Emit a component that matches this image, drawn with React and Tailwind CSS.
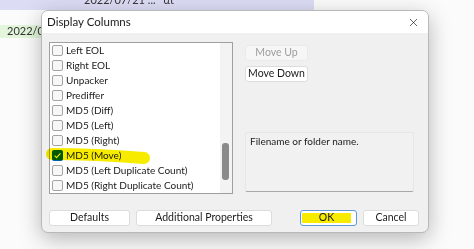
import React from 'react';
import { X } from 'lucide-react';

const columns = [
  { label: 'Left EOL' },
  { label: 'Right EOL' },
  { label: 'Unpacker' },
  { label: 'Prediffer' },
  { label: 'MD5 (Diff)' },
  { label: 'MD5 (Left)' },
  { label: 'MD5 (Right)' },
  { label: 'MD5 (Move)', checked: true },
  { label: 'MD5 (Left Duplicate Count)' },
  { label: 'MD5 (Right Duplicate Count)' },
];

const Checkbox = ({ checked }) =>
  checked ? (
    <span className="flex h-[11px] w-[11px] shrink-0 items-center justify-center rounded-[2px] bg-[#005fb8]">
      <svg width="9" height="9" viewBox="0 0 9 9" fill="none">
        <path d="M1.6 4.7 L3.6 6.6 L7.4 2.4" stroke="white" strokeWidth="1.1" />
      </svg>
    </span>
  ) : (
    <span className="h-[11px] w-[11px] shrink-0 rounded-[2px] border border-[#a3a3a3] bg-[#f7f7f7]" />
  );

const Button = ({ children, className = '', disabled }) => (
  <button
    type="button"
    className={
      'flex h-[16px] items-center justify-center whitespace-nowrap rounded-[3px] border text-[10.5px] ' +
      (disabled
        ? 'border-[#eaeaea] bg-[#f6f6f6] text-[#9d9d9d] '
        : 'border-[#dcdcdc] bg-white text-[#1b1b1b] ') +
      className
    }
  >
    {children}
  </button>
);

const App = () => {
  return (
    <section
      className="relative h-[249px] w-[474px] overflow-hidden bg-[#fbfbfb] text-[#1b1b1b]"
      style={{ fontFamily: 'Lato, "Noto Sans", sans-serif' }}
    >
      {/* file list behind the dialog */}
      <div className="h-[10px] w-[314px] overflow-hidden bg-[#dcdcf5]">
        <div className="-mt-[7px] flex gap-[8px] pl-[84px] text-[11px] leading-[14px] text-[#333]">
          <span>2022/07/21 ...</span>
          <span>αt</span>
        </div>
      </div>
      <div className="mt-[15px] flex h-[13px] w-[300px] items-center bg-[#e3f6dc] pl-[7px] text-[11px] text-[#333]">
        2022/07/21
      </div>

      {/* Display Columns dialog */}
      <div className="absolute left-[41px] top-[10px] flex h-[223px] w-[388px] flex-col overflow-hidden rounded-[7px] border border-[#b8b8b8] bg-[#f0f0f0] shadow-[0_6px_22px_rgba(0,0,0,0.28)]">
        <div className="flex h-[22px] items-center justify-between bg-white pl-[5px] pr-[8px] text-[11.5px]">
          <span>Display Columns</span>
          <X size={13} strokeWidth={1.3} className="text-[#222]" />
        </div>

        <div className="flex flex-1 flex-col pl-[7px] pr-[9px] pt-[9px]">
          <div className="flex gap-[12px]">
            <div className="flex h-[152px] w-[184px] border border-[#9f9f9f] bg-white">
              <ul className="flex-1 pl-[2px]">
                {columns.map((c) => (
                  <li key={c.label} className="flex h-[15px] items-center gap-[3px] whitespace-nowrap text-[10px]">
                    <Checkbox checked={c.checked} />
                    <span>{c.label}</span>
                  </li>
                ))}
              </ul>
              <div className="w-[12px] bg-[#f3f3f3] pl-[2px] pt-[100px]">
                <div className="h-[37px] w-[7px] rounded-[3px] bg-[#8a8a8a]" />
              </div>
            </div>

            <div className="flex w-[169px] flex-col">
              <Button disabled className="mt-[3px] w-[63px]">Move Up</Button>
              <Button className="mt-[5px] w-[63px]">Move Down</Button>
              <div className="mt-[50px] h-[60px] rounded-[2px] border border-[#e6e6e6] border-b-[#a8a8a8] bg-[#f1f1f1] px-[4px] pt-[1px] text-[10px]">
                Filename or folder name.
              </div>
            </div>
          </div>

          <div className="mt-[16px] flex">
            <Button className="w-[81px]">Defaults</Button>
            <Button className="ml-[6px] w-[136px]">Additional Properties</Button>
            <button
              type="button"
              className="ml-auto flex h-[16px] w-[57px] items-center rounded-[3px] border border-[#5d9ad6] bg-white pl-[1px] text-[10.5px]"
            >
              <span className="flex h-[10px] w-[49px] items-center justify-center bg-[#f7ec00]">OK</span>
            </button>
            <Button className="ml-[6px] w-[56px]">Cancel</Button>
          </div>
        </div>
      </div>

      {/* highlighter stroke over "MD5 (Move)" */}
      <svg className="pointer-events-none absolute left-[44px] top-[144px] mix-blend-multiply" width="110" height="26" viewBox="0 0 110 26">
        <path d="M8 10 C 40 10, 75 12, 100 14" stroke="#f7ec00" strokeWidth="12" strokeLinecap="round" fill="none" />
      </svg>
    </section>
  );
};

export default App;
